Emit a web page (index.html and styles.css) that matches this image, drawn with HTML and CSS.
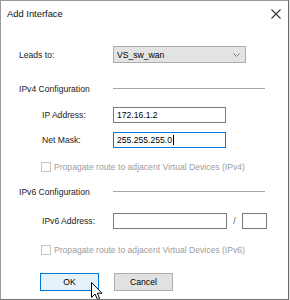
FILE: index.html
```html
<!DOCTYPE html>
<html>
<head>
<meta charset="utf-8">
<link rel="stylesheet" href="styles.css">
</head>
<body>
<div class="window">
  <div class="titlebar">
    <span class="title">Add Interface</span>
    <svg class="close" width="10" height="10" viewBox="0 0 10 10"><path d="M0.5 0.5 L9.5 9.5 M9.5 0.5 L0.5 9.5" stroke="#333" stroke-width="1.1" fill="none"/></svg>
  </div>
  <div class="content">
    <div class="row leads">
      <span class="label">Leads to:</span>
      <div class="combo"><span>VS_sw_wan</span>
        <svg class="chev" width="7" height="4" viewBox="0 0 7 4"><path d="M0.5 0.5 L3.5 3.5 L6.5 0.5" stroke="#777" stroke-width="1" fill="none"/></svg>
      </div>
    </div>
    <div class="row section s4">
      <span class="label">IPv4 Configuration</span>
      <div class="sep"></div>
    </div>
    <div class="row field f-ip">
      <span class="label sub">IP Address:</span>
      <div class="edit">172.16.1.2</div>
    </div>
    <div class="row field f-mask">
      <span class="label sub">Net Mask:</span>
      <div class="edit focus">255.255.255.0<span class="caret"></span></div>
    </div>
    <div class="row check c4">
      <span class="box"></span>
      <span class="ctext">Propagate route to adjacent Virtual Devices (IPv4)</span>
    </div>
    <div class="row section s6">
      <span class="label">IPv6 Configuration</span>
      <div class="sep"></div>
    </div>
    <div class="row field f-ip6">
      <span class="label sub">IPv6 Address:</span>
      <div class="edit wide"></div>
      <span class="slash">/</span>
      <div class="edit tiny"></div>
    </div>
    <div class="row check c6">
      <span class="box"></span>
      <span class="ctext">Propagate route to adjacent Virtual Devices (IPv6)</span>
    </div>
    <div class="row buttons">
      <div class="btn default">OK</div>
      <div class="btn">Cancel</div>
    </div>
  </div>
  <svg class="cursor" width="13" height="19" viewBox="0 0 13 19"><path d="M0.5 0.5 L0.5 15.5 L4 12 L6.5 17.5 L8.7 16.5 L6.3 11.2 L11 11.2 Z" fill="#fff" stroke="#000" stroke-width="1" stroke-linejoin="miter"/></svg>
</div>
</body>
</html>
```
FILE: styles.css
```css
html, body {
  margin: 0;
  padding: 0;
  background: #e9e9e9;
}
body {
  font-family: "Liberation Sans", Arial, sans-serif;
  font-size: 8.6px;
  color: #1a1a1a;
}
.window {
  position: relative;
  width: 289px;
  height: 300px;
  box-sizing: border-box;
  background: #fff;
  border: 1px solid #9a9a9a;
  border-right-color: #666;
  border-bottom-color: #777;
  overflow: hidden;
}
.titlebar {
  height: 24px;
  display: flex;
  align-items: center;
  justify-content: space-between;
  padding: 0 7px 0 6px;
}
.title {
  font-size: 9.4px;
  color: #111;
}
.close {
  margin-top: 2px;
}
.content {
  padding-left: 18px;
  display: flex;
  flex-direction: column;
}
.row {
  display: flex;
  align-items: center;
}
.label {
  width: 94px;
  flex: none;
}
.label.sub {
  width: 71px;
  padding-left: 23px;
}
.leads { margin-top: 21px; height: 17px; }
.combo {
  width: 133px;
  height: 17px;
  box-sizing: border-box;
  border: 1px solid #adadad;
  background: #e3e3e3;
  display: flex;
  align-items: center;
  justify-content: space-between;
  padding: 0 5px 0 3px;
  color: #000;
}
.chev { margin-top: 1px; }
.section { height: 12px; }
.s4 { margin-top: 20px; }
.s6 { margin-top: 14px; }
.section .label { color: #222; }
.sep {
  width: 152px;
  height: 1px;
  background: #a8a8a8;
  margin-top: -2px;
}
.field { height: 16px; }
.f-ip { margin-top: 12px; }
.f-mask { margin-top: 9px; }
.f-ip6 { margin-top: 15px; }
.edit {
  width: 113px;
  height: 16px;
  box-sizing: border-box;
  border: 1px solid #7a7a7a;
  background: #fff;
  padding-left: 3px;
  display: flex;
  align-items: center;
  color: #000;
}
.edit.focus { border-color: #0078d7; }
.caret {
  display: inline-block;
  width: 1px;
  height: 10px;
  background: #000;
  margin-left: 1px;
}
.edit.wide { width: 114px; }
.slash {
  width: 15px;
  text-align: center;
  color: #555;
}
.edit.tiny { width: 25px; }
.check { height: 11px; padding-left: 22px; }
.c4 { margin-top: 13px; }
.c6 { margin-top: 15px; }
.box {
  width: 10px;
  height: 10px;
  box-sizing: border-box;
  border: 1px solid #c4c4c4;
  background: #fff;
  flex: none;
}
.ctext {
  margin-left: 3px;
  color: #9d9d9d;
}
.buttons {
  margin-top: 18px;
  padding-left: 21px;
  gap: 15px;
}
.btn {
  width: 59px;
  height: 18px;
  box-sizing: border-box;
  border: 1px solid #adadad;
  background: #e1e1e1;
  display: flex;
  align-items: center;
  justify-content: center;
  color: #000;
}
.btn.default {
  border-color: #0078d7;
  background: #e5f1fb;
}
.cursor {
  position: absolute;
  left: 90px;
  top: 281px;
}
```
